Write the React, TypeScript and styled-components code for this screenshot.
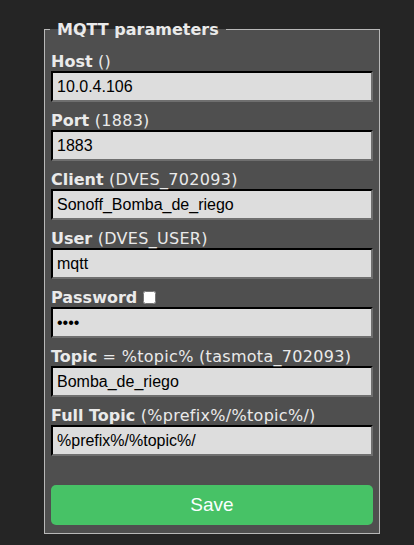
import styled, { createGlobalStyle } from "styled-components";

const GlobalStyle = createGlobalStyle`
  html, body {
    margin: 0;
    padding: 0;
    background: #252525;
  }
  body {
    font-family: "DejaVu Sans", Verdana, sans-serif;
    font-size: 16px;
    color: #eaeaea;
  }
`;

const Page = styled.div`
  padding: 20px 0 0 44px;
  min-height: 545px;
  box-sizing: border-box;
`;

const FieldSet = styled.fieldset`
  width: 336px;
  box-sizing: border-box;
  margin: 0;
  padding: 4px 6px 8px;
  border: 1px solid #b8b8b8;
  background: #4f4f4f;
`;

const Legend = styled.legend`
  font-weight: bold;
  line-height: 19px;
  padding: 0 7px;
  margin-left: -1px;
`;

const Field = styled.p`
  margin: 9px 0 0;
  line-height: 19px;
  letter-spacing: 0.3px;
`;

const LabelName = styled.b`
  font-weight: bold;
  letter-spacing: 0;
`;

const TextInput = styled.input`
  display: block;
  width: 100%;
  box-sizing: border-box;
  margin: 0;
  padding: 4px;
  height: 31px;
  font-family: "Liberation Sans", Arial, sans-serif;
  font-size: 16px;
  letter-spacing: 0;
  color: #000;
  background: #dddddd;
  border: 2px inset #767676;
  border-top-color: #1f1f1f;
  border-left-color: #1f1f1f;
  border-right-color: #6f6f6f;
  border-bottom-color: #6f6f6f;
  outline: none;
`;

const Check = styled.input`
  width: 13px;
  height: 13px;
  margin: 0 0 0 6px;
  vertical-align: -1px;
`;

const SaveButton = styled.button`
  display: block;
  width: 100%;
  margin-top: 29px;
  height: 40px;
  border: 0;
  border-radius: 5px;
  background: #47c266;
  color: #faffff;
  font-family: "Liberation Sans", Arial, sans-serif;
  font-size: 19px;
  cursor: pointer;
`;

type FieldDef = {
  name: string;
  hint: string;
  value: string;
  type?: string;
  toggle?: boolean;
};

const fields: FieldDef[] = [
  { name: "Host", hint: " ()", value: "10.0.4.106" },
  { name: "Port", hint: " (1883)", value: "1883" },
  { name: "Client", hint: " (DVES_702093)", value: "Sonoff_Bomba_de_riego" },
  { name: "User", hint: " (DVES_USER)", value: "mqtt" },
  { name: "Password", hint: "", value: "abcd", type: "password", toggle: true },
  { name: "Topic", hint: " = %topic% (tasmota_702093)", value: "Bomba_de_riego" },
  { name: "Full Topic", hint: " (%prefix%/%topic%/)", value: "%prefix%/%topic%/" },
];

export default function App() {
  return (
    <>
      <GlobalStyle />
      <Page>
        <FieldSet>
          <Legend>MQTT parameters</Legend>
          {fields.map((f) => (
            <Field key={f.name}>
              <LabelName>{f.name}</LabelName>
              {f.hint}
              {f.toggle ? <Check type="checkbox" /> : null}
              <TextInput type={f.type ?? "text"} defaultValue={f.value} />
            </Field>
          ))}
          <SaveButton>Save</SaveButton>
        </FieldSet>
      </Page>
    </>
  );
}
